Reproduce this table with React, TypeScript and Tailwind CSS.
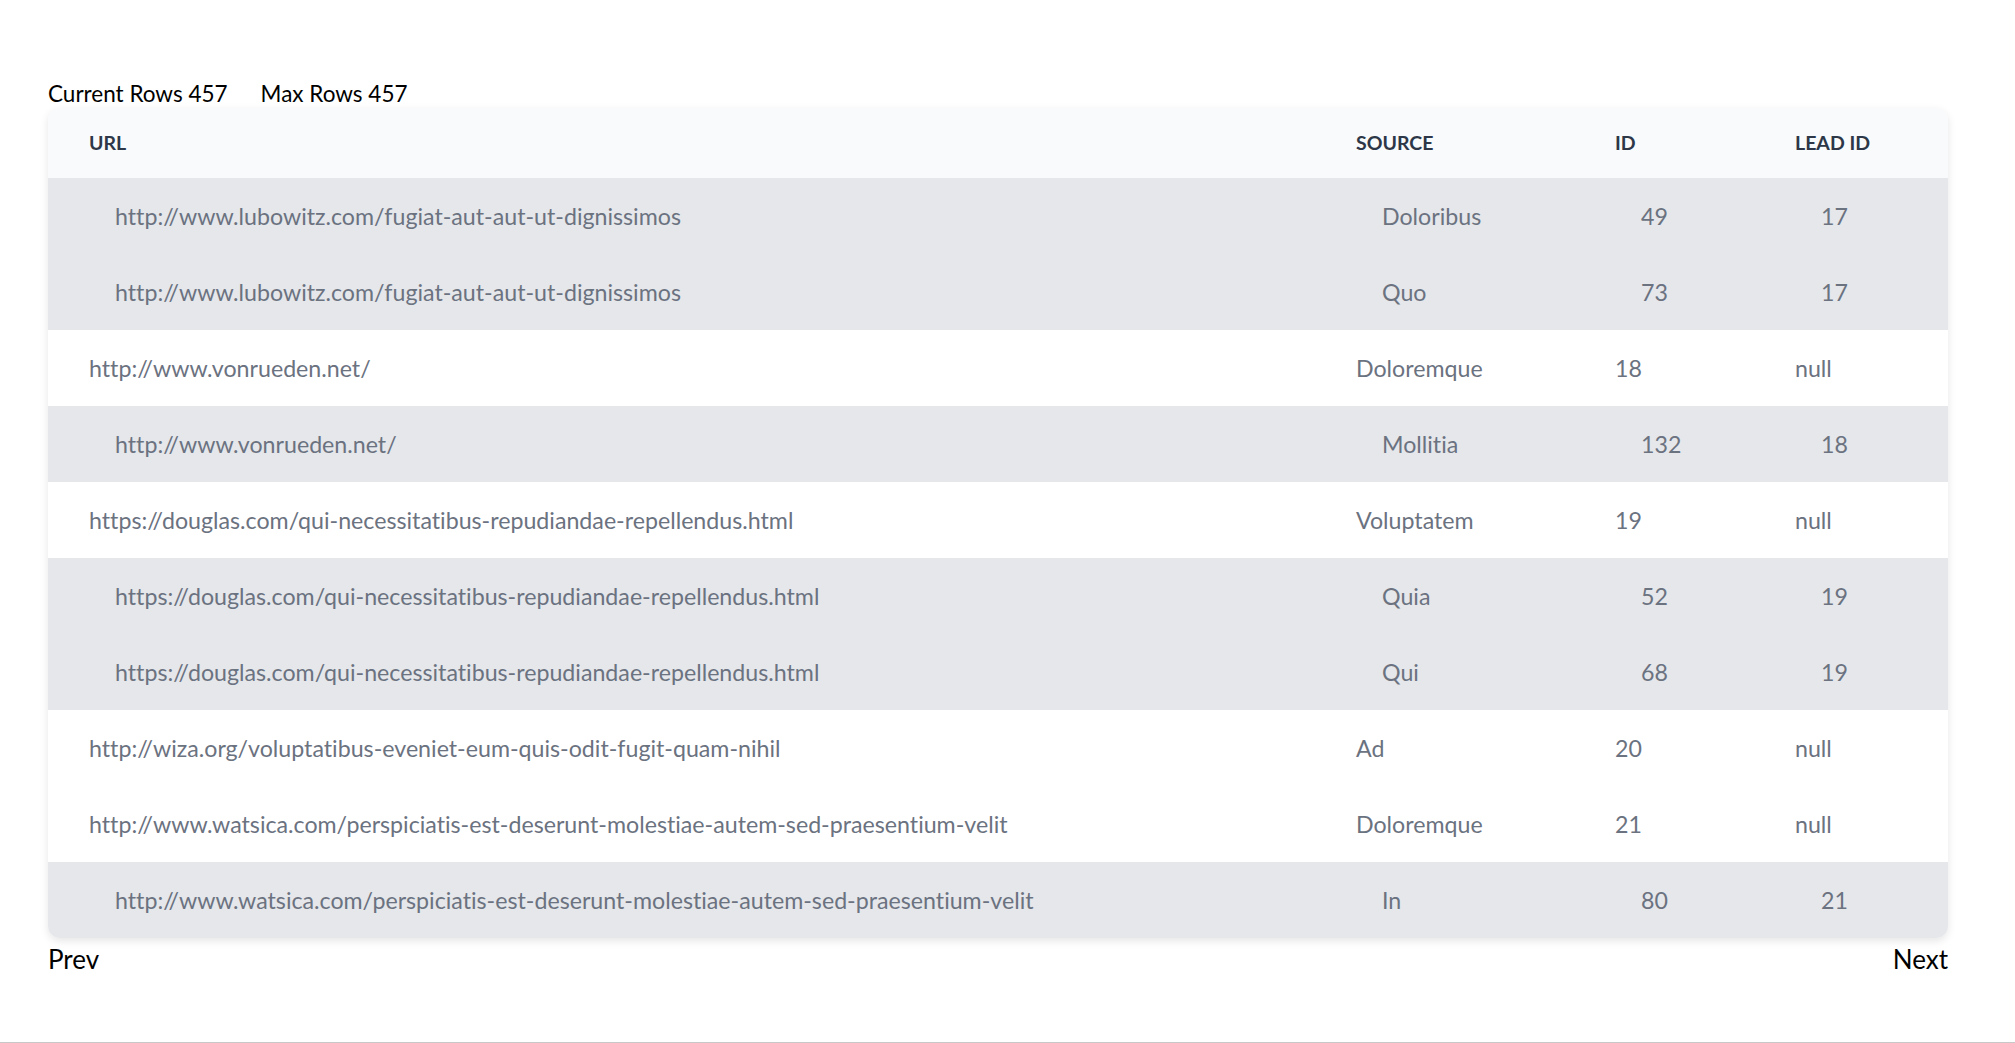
import React from "react";

interface LinkRow {
  url: string;
  source: string;
  id: string;
  leadId: string;
  child: boolean;
}

const rows: LinkRow[] = [
  { url: "http://www.lubowitz.com/fugiat-aut-aut-ut-dignissimos", source: "Doloribus", id: "49", leadId: "17", child: true },
  { url: "http://www.lubowitz.com/fugiat-aut-aut-ut-dignissimos", source: "Quo", id: "73", leadId: "17", child: true },
  { url: "http://www.vonrueden.net/", source: "Doloremque", id: "18", leadId: "null", child: false },
  { url: "http://www.vonrueden.net/", source: "Mollitia", id: "132", leadId: "18", child: true },
  { url: "https://douglas.com/qui-necessitatibus-repudiandae-repellendus.html", source: "Voluptatem", id: "19", leadId: "null", child: false },
  { url: "https://douglas.com/qui-necessitatibus-repudiandae-repellendus.html", source: "Quia", id: "52", leadId: "19", child: true },
  { url: "https://douglas.com/qui-necessitatibus-repudiandae-repellendus.html", source: "Qui", id: "68", leadId: "19", child: true },
  { url: "http://wiza.org/voluptatibus-eveniet-eum-quis-odit-fugit-quam-nihil", source: "Ad", id: "20", leadId: "null", child: false },
  { url: "http://www.watsica.com/perspiciatis-est-deserunt-molestiae-autem-sed-praesentium-velit", source: "Doloremque", id: "21", leadId: "null", child: false },
  { url: "http://www.watsica.com/perspiciatis-est-deserunt-molestiae-autem-sed-praesentium-velit", source: "In", id: "80", leadId: "21", child: true },
];

const cols = "grid grid-cols-[1267px_259px_180px_1fr]";

export default function App() {
  return (
    <div className="min-h-[1043px] bg-white border-b border-[#c8c8c8] font-['Lato',sans-serif] [font-variant-ligatures:none]">
      <div className="w-[1900px] ml-[48px] pt-[79px]">
        <div className="flex gap-[33px] text-[22.5px] leading-[29px] text-black">
          <span>Current Rows 457</span>
          <span>Max Rows 457</span>
        </div>

        <div className="rounded-xl overflow-hidden shadow-[0_3px_8px_rgba(0,0,0,0.1)] bg-white">
          <div className={`${cols} h-[70px] items-center bg-[#f9fafb] text-[19.5px] font-bold text-[#2d3748]`}>
            <div className="pl-[41px]">URL</div>
            <div className="pl-[41px]">SOURCE</div>
            <div className="pl-[41px]">ID</div>
            <div className="pl-[41px]">LEAD ID</div>
          </div>
          {rows.map((row, i) => (
            <div
              key={i}
              className={`${cols} h-[76px] items-center text-[23.2px] text-[#6b7280] ${row.child ? "bg-[#e5e7eb]" : "bg-white"}`}
            >
              <div className={row.child ? "pl-[67px]" : "pl-[41px]"}>{row.url}</div>
              <div className={row.child ? "pl-[67px]" : "pl-[41px]"}>{row.source}</div>
              <div className={row.child ? "pl-[67px]" : "pl-[41px]"}>{row.id}</div>
              <div className={row.child ? "pl-[67px]" : "pl-[41px]"}>{row.leadId}</div>
            </div>
          ))}
        </div>

        <div className="flex justify-between pt-[2px] text-[26px] leading-[39px] text-black">
          <button>Prev</button>
          <button>Next</button>
        </div>
      </div>
    </div>
  );
}
